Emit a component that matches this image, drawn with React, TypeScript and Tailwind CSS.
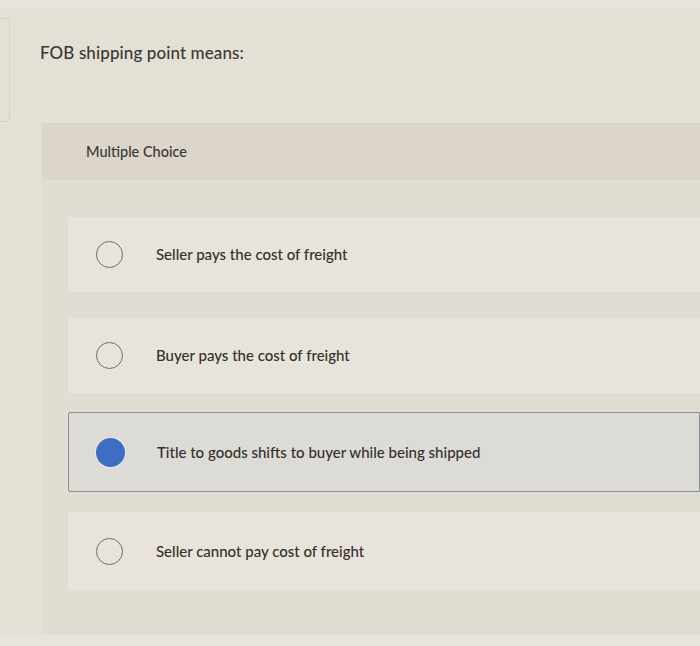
const OPTIONS = [
  { label: 'Seller pays the cost of freight', selected: false, cls: 'h-[75px] mb-[26px]' },
  { label: 'Buyer pays the cost of freight', selected: false, cls: 'h-[75px] mb-[19px]' },
  { label: 'Title to goods shifts to buyer while being shipped', selected: true, cls: 'h-[80px] mb-[20px]' },
  { label: 'Seller cannot pay cost of freight', selected: false, cls: 'h-[78px]' },
]

function Radio({ selected }: { selected: boolean }) {
  if (selected) {
    return <span className="block w-[29px] h-[29px] rounded-full bg-[#3e6dc3] ring-1 ring-[#eceae4]" />
  }
  return <span className="block w-[27px] h-[27px] rounded-full border-[1.5px] border-[#6f6b66]" />
}

export default function App() {
  return (
    <div
      className="w-[700px] h-[646px] overflow-hidden bg-[#e5e0d6] text-[#3a3735]"
      style={{ fontFamily: 'Lato, "Open Sans", sans-serif' }}
    >
      <div className="h-[8px] bg-[#e9e5dc]" />
      <div className="flex h-[115px]">
        <div className="w-[10px] mt-[10px] h-[104px] border-r border-y border-[#d6d0c5] rounded-r-sm" />
        <h1 className="ml-[30px] mt-[36px] text-[17px] font-medium leading-none tracking-[0.1px]">FOB shipping point means:</h1>
      </div>
      <div className="ml-[42px] h-[512px] bg-[#e2ddd3]">
        <div className="h-[57px] bg-[#dbd5ca] pl-[44px] pt-[22px] text-[14.5px] font-medium leading-none">Multiple Choice</div>
        <div className="pl-[26px] pt-[37px] flex flex-col">
          {OPTIONS.map((o, i) => (
            <div
              key={i}
              className={
                o.selected
                  ? `flex items-center ${o.cls} bg-[#dddbd6] border border-[#8b8e96] rounded-l-[2px]`
                  : `flex items-center ${o.cls} bg-[#e8e4db]`
              }
            >
              <div className="w-[84px] flex justify-center pr-[1px]">
                <Radio selected={o.selected} />
              </div>
              <span className="ml-[4px] text-[15px] font-medium leading-none text-[#33302e]">{o.label}</span>
            </div>
          ))}
        </div>
      </div>
      <div className="h-[11px] bg-[#e8e4dc]" />
    </div>
  )
}
